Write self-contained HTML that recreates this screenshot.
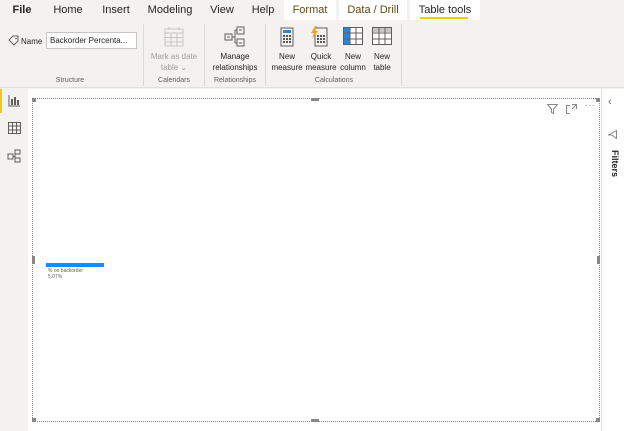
<!DOCTYPE html>
<html><head><meta charset="utf-8"><style>
*{box-sizing:border-box;margin:0;padding:0}
body{width:624px;height:431px;overflow:hidden;background:#f3f2f1;font-family:"Liberation Sans","DejaVu Sans",sans-serif;color:#252423;position:relative}
.abs{position:absolute}
.tab{position:absolute;top:0;height:20px;line-height:20px;font-size:11px;text-align:center;color:#252423}
.lbl{position:absolute;font-size:8px;line-height:11px;text-align:center;color:#252423;white-space:nowrap}
.grp{position:absolute;top:77px;font-size:7px;color:#605e5c;text-align:center}
.sep{position:absolute;top:24px;width:1px;height:62px;background:#dcdad8}
</style></head><body>
<div class="tab" style="left:0;width:44px;font-weight:bold">File</div>
<div class="tab" style="left:46px;width:44px">Home</div>
<div class="tab" style="left:94px;width:44px">Insert</div>
<div class="tab" style="left:143px;width:54px">Modeling</div>
<div class="tab" style="left:204px;width:36px">View</div>
<div class="tab" style="left:245px;width:36px">Help</div>
<div class="tab" style="left:284px;width:52px;background:#fff;color:#5c4a12">Format</div>
<div class="tab" style="left:339px;width:68px;background:#fff;color:#5c4a12">Data / Drill</div>
<div class="tab" style="left:410px;width:70px;background:#fff;color:#252423">Table tools</div>
<div class="abs" style="left:420px;top:17px;width:48px;height:2px;background:#f2c811"></div>
<div class="abs" style="left:0;top:20px;width:624px;height:68px;background:#f3f2f1;border-bottom:1px solid #e1dfdd"></div>
<svg class="abs" style="left:8px;top:35px" width="12" height="12" viewBox="0 0 12 12"><path d="M1 5 L5 1 H10 V6 L6 10 Z" fill="none" stroke="#605e5c"/><circle cx="8" cy="3.5" r="0.8" fill="#605e5c"/></svg>
<div class="abs" style="left:21px;top:37px;font-size:8px">Name</div>
<div class="abs" style="left:46px;top:32px;width:91px;height:17px;background:#fff;border:1px solid #c8c6c4;font-size:8px;line-height:15px;padding-left:3px;white-space:nowrap;overflow:hidden">Backorder Percenta...</div>
<div class="grp" style="left:40px;width:60px">Structure</div>
<div class="sep" style="left:143px"></div>
<svg class="abs" style="left:164px;top:27px" width="20" height="20" viewBox="0 0 20 20"><rect x="1" y="2" width="18" height="17" fill="none" stroke="#c8c6c4"/><path d="M1 6H19M1 10.5H19M1 15H19M7 6V19M13 6V19M5 0V3M15 0V3" stroke="#c8c6c4"/></svg>
<div class="lbl" style="left:146px;top:51px;width:56px;color:#a19f9d">Mark as date<br>table ⌄</div>
<div class="grp" style="left:146px;width:56px">Calendars</div>
<div class="sep" style="left:204px"></div>
<svg class="abs" style="left:224px;top:26px" width="22" height="22" viewBox="0 0 22 22"><rect x="1" y="8" width="7" height="6" fill="none" stroke="#605e5c"/><rect x="13" y="1" width="7" height="7" fill="none" stroke="#605e5c"/><rect x="13" y="13" width="7" height="7" fill="none" stroke="#605e5c"/><path d="M8 11H11M11 4V17M11 4H13M11 17H13M3 11H6M15 4H18M15 17H18" stroke="#605e5c"/></svg>
<div class="lbl" style="left:206px;top:51px;width:58px">Manage<br>relationships</div>
<div class="grp" style="left:206px;width:58px">Relationships</div>
<div class="sep" style="left:265px"></div>
<svg class="abs" style="left:280px;top:27px" width="14" height="20" viewBox="0 0 14 20"><rect x="1" y="1" width="12" height="18" fill="none" stroke="#605e5c"/><rect x="3" y="3" width="8" height="3" fill="#2b88d8"/><path d="M3 9h2M6 9h2M9 9h2M3 12h2M6 12h2M9 12h2M3 15h2M6 15h2M9 15h2" stroke="#252423" stroke-width="1.5"/></svg>
<div class="lbl" style="left:270px;top:51px;width:34px">New<br>measure</div>
<svg class="abs" style="left:310px;top:26px" width="18" height="21" viewBox="0 0 18 21"><rect x="5" y="2" width="12" height="18" fill="none" stroke="#605e5c"/><path d="M7 10h2M10 10h2M13 10h2M7 13h2M10 13h2M13 13h2M7 16h2M10 16h2M13 16h2" stroke="#252423" stroke-width="1.5"/><path d="M5 0 L1 7 H4 L2 13 L8 5 H5 L7 0Z" fill="#f7a21b"/></svg>
<div class="lbl" style="left:304px;top:51px;width:34px">Quick<br>measure</div>
<svg class="abs" style="left:343px;top:27px" width="20" height="18" viewBox="0 0 20 18"><rect x="0.5" y="0.5" width="19" height="17" fill="#fff" stroke="#605e5c"/><rect x="1" y="1" width="6" height="16" fill="#2b88d8"/><path d="M0 6H20M0 12H20M7 0V18M13 0V18" stroke="#605e5c"/></svg>
<div class="lbl" style="left:338px;top:51px;width:30px">New<br>column</div>
<svg class="abs" style="left:372px;top:27px" width="20" height="18" viewBox="0 0 20 18"><rect x="0.5" y="0.5" width="19" height="17" fill="#fff" stroke="#605e5c"/><rect x="1" y="1" width="18" height="4" fill="#c8c6c4"/><path d="M0 6H20M0 12H20M7 0V18M13 0V18" stroke="#605e5c"/></svg>
<div class="lbl" style="left:368px;top:51px;width:28px">New<br>table</div>
<div class="grp" style="left:270px;width:128px">Calculations</div>
<div class="sep" style="left:401px"></div>
<div class="abs" style="left:0;top:89px;width:2px;height:24px;background:#f2c811"></div>
<svg class="abs" style="left:8px;top:95px" width="13" height="12" viewBox="0 0 13 12"><path d="M1 0V11H12" fill="none" stroke="#605e5c"/><rect x="3" y="4" width="2" height="6" fill="#605e5c"/><rect x="6" y="2" width="2" height="8" fill="#605e5c"/><rect x="9" y="5" width="2" height="5" fill="#605e5c"/></svg>
<svg class="abs" style="left:8px;top:122px" width="13" height="12" viewBox="0 0 13 12"><rect x="0.5" y="0.5" width="12" height="11" fill="none" stroke="#605e5c"/><path d="M0 4H13M0 8H13M4.5 0V12M8.5 0V12" stroke="#605e5c"/></svg>
<svg class="abs" style="left:7px;top:149px" width="14" height="14" viewBox="0 0 14 14"><rect x="1" y="5" width="5" height="5" fill="none" stroke="#605e5c"/><rect x="8" y="1" width="5" height="4" fill="none" stroke="#605e5c"/><rect x="8" y="9" width="5" height="4" fill="none" stroke="#605e5c"/><path d="M6 7.5H8M8 3V11" stroke="#605e5c"/></svg>
<div class="abs" style="left:28px;top:89px;width:573px;height:342px;background:#fff"></div>
<div class="abs" style="left:32px;top:98px;width:568px;height:324px;border:1px dotted #8a8886"></div>
<div class="abs" style="left:32px;top:98px;width:4px;height:4px;background:#8a8886"></div>
<div class="abs" style="left:596px;top:98px;width:4px;height:4px;background:#8a8886"></div>
<div class="abs" style="left:32px;top:418px;width:4px;height:4px;background:#8a8886"></div>
<div class="abs" style="left:596px;top:418px;width:4px;height:4px;background:#8a8886"></div>
<div class="abs" style="left:311px;top:98px;width:8px;height:3px;background:#8a8886"></div>
<div class="abs" style="left:311px;top:419px;width:8px;height:3px;background:#8a8886"></div>
<div class="abs" style="left:32px;top:256px;width:3px;height:8px;background:#8a8886"></div>
<div class="abs" style="left:597px;top:256px;width:3px;height:8px;background:#8a8886"></div>
<svg class="abs" style="left:547px;top:104px" width="11" height="10" viewBox="0 0 11 10"><path d="M0.5 0.5H10.5L6.5 5V9.5L4.5 8.5V5Z" fill="none" stroke="#8a8886"/></svg>
<svg class="abs" style="left:566px;top:104px" width="11" height="10" viewBox="0 0 11 10"><path d="M6 0.5H10.5V5M10.5 0.5L6 5M4 9.5H0.5V1.5H4" fill="none" stroke="#8a8886"/></svg>
<div class="abs" style="left:585px;top:100px;font-size:10px;color:#8a8886">···</div>
<div class="abs" style="left:46px;top:263px;width:58px;height:4px;background:#118dff"></div>
<div class="abs" style="left:48px;top:268px;font-size:5px;line-height:6px;color:#605e5c">% on backorder<br>5.07%</div>
<div class="abs" style="left:601px;top:89px;width:1px;height:342px;background:#e1dfdd"></div>
<div class="abs" style="left:602px;top:89px;width:22px;height:342px;background:#fff"></div>
<div class="abs" style="left:608px;top:96px;font-size:11px;color:#605e5c">‹</div>
<svg class="abs" style="left:608px;top:130px" width="9" height="9" viewBox="0 0 9 9"><path d="M8.5 0.5V8.5L4 5H0.5Z" fill="none" stroke="#8a8886"/></svg>
<div class="abs" style="left:604px;top:150px;width:16px;font-size:9px;font-weight:bold;writing-mode:vertical-rl;color:#252423">Filters</div>
</body></html>
